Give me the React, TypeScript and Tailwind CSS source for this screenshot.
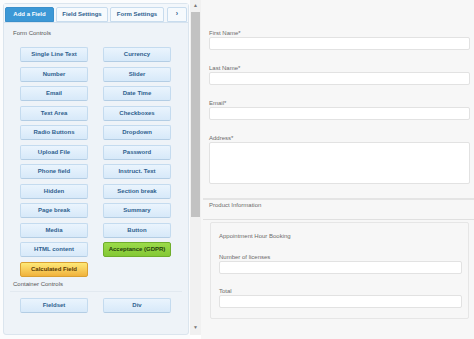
import React from "react";

const rows: [string, string | null][] = [
  ["Single Line Text", "Currency"],
  ["Number", "Slider"],
  ["Email", "Date Time"],
  ["Text Area", "Checkboxes"],
  ["Radio Buttons", "Dropdown"],
  ["Upload File", "Password"],
  ["Phone field", "Instruct. Text"],
  ["Hidden", "Section break"],
  ["Page break", "Summary"],
  ["Media", "Button"],
  ["HTML content", "Acceptance (GDPR)"],
  ["Calculated Field", null],
];

function Btn({ label }: { label: string }) {
  if (label === "Acceptance (GDPR)") {
    return (
      <div className="h-[15px] flex items-center justify-center rounded-[2px] border border-[#6fae2c] bg-gradient-to-b from-[#9bdb4a] to-[#84c835] text-[6px] font-bold text-[#24400c]">
        {label}
      </div>
    );
  }
  if (label === "Calculated Field") {
    return (
      <div className="h-[15px] flex items-center justify-center rounded-[2px] border border-[#d9a032] bg-gradient-to-b from-[#fde977] to-[#f0b23c] text-[6px] font-bold text-[#5a3b06]">
        {label}
      </div>
    );
  }
  return (
    <div className="h-[15px] flex items-center justify-center rounded-[2px] border border-[#c4dbef] border-b-[#b3cde4] bg-gradient-to-b from-[#eaf4fd] to-[#d7e9f9] text-[6px] font-bold text-[#2f5f8e]">
      {label}
    </div>
  );
}

function Field({ label, h = 13, w = 261, mb = 14 }: { label: string; h?: number; w?: number; mb?: number }) {
  return (
    <div style={{ marginBottom: mb }}>
      <div className="h-[8px] leading-[8px] text-[6px] text-[#6b6b6b]">{label}</div>
      <div className="bg-white border border-[#e2e2e2] rounded-[2px]" style={{ height: h, width: w }} />
    </div>
  );
}

export default function App() {
  return (
    <div
      className="w-[474px] h-[339px] flex bg-white overflow-hidden"
      style={{ fontFamily: '"Liberation Sans", Arial, sans-serif' }}
    >
      {/* Left panel */}
      <div className="w-[190px] pl-[3px] pt-[3px] pb-[4px] bg-[#fbfcfd]">
        <div className="w-[186px] h-full rounded-[3px] border border-[#dbe5ee] bg-[#eef3f8] flex flex-col">
          <div className="h-[19px] flex items-end gap-[2px] px-[1px] border-b border-[#d5e2ee] bg-[#f3f7fb]">
            <div className="w-[49px] h-[15px] flex items-center justify-center rounded-t-[2px] bg-[#3c98d6] border border-[#3a8fcb] text-[6px] font-bold text-white">
              Add a Field
            </div>
            <div className="w-[52px] h-[15px] flex items-center justify-center rounded-t-[2px] bg-[#f6fafd] border border-[#c8dcee] text-[6px] font-bold text-[#2f5f8e]">
              Field Settings
            </div>
            <div className="w-[54px] h-[15px] flex items-center justify-center rounded-t-[2px] bg-[#f6fafd] border border-[#c8dcee] text-[6px] font-bold text-[#2f5f8e]">
              Form Settings
            </div>
            <div className="ml-[1px] w-[20px] h-[15px] flex items-center justify-center rounded-t-[2px] bg-[#f6fafd] border border-[#c8dcee] text-[7px] font-bold text-[#2f5f8e]">
              ›
            </div>
          </div>
          <div className="pt-[6px] pl-[9px] h-[14px] leading-[8px] text-[6px] text-[#555]">Form Controls</div>
          <div className="mt-[10px] ml-[16px] grid grid-cols-[68px_68px] gap-x-[15px] gap-y-[4.5px]">
            {rows.map(([a, b], i) => (
              <React.Fragment key={i}>
                <Btn label={a} />
                {b ? <Btn label={b} /> : <div />}
              </React.Fragment>
            ))}
          </div>
          <div className="mt-[3px] pl-[9px] h-[8px] leading-[8px] text-[6px] text-[#555]">Container Controls</div>
          <div className="mt-[3px] mx-[6px] border-t border-[#e2e9f0]" />
          <div className="mt-[6px] ml-[16px] grid grid-cols-[68px_68px] gap-x-[15px]">
            <Btn label="Fieldset" />
            <Btn label="Div" />
          </div>
        </div>
      </div>

      {/* Scrollbar */}
      <div className="w-[11px] h-[335px] bg-[#f1f1f1] flex flex-col items-center">
        <div className="h-[12px] flex items-center justify-center text-[5px] text-[#777]">▲</div>
        <div className="w-[9px] h-[205px] bg-[#c2c2c2]" />
        <div className="flex-1" />
        <div className="h-[14px] flex items-center justify-center text-[5px] text-[#777]">▼</div>
      </div>

      {/* Right area */}
      <div className="flex-1 bg-[#f7f7f7] pt-[29px] pl-[8px] flex flex-col">
        <Field label="First Name*" />
        <Field label="Last Name*" />
        <Field label="Email*" />
        <Field label="Address*" h={42} mb={14} />
        <div className="-ml-[6px] border-t-2 border-[#e4e4e4]" />
        <div className="mt-[1px] h-[8px] leading-[8px] text-[6px] text-[#6b6b6b]">Product Information</div>
        <div className="mt-[10px] -ml-[6px] border-t border-[#e0e0e0]" />
        <div className="mt-[2px] ml-[1px] w-[259px] h-[97px] border border-[#e6e6e6] rounded-[2px] pl-[8px] pt-[9px]">
          <div className="h-[8px] leading-[8px] text-[6px] text-[#6b6b6b]">Appointment Hour Booking</div>
          <div className="mt-[13px]">
            <Field label="Number of licenses" w={243} mb={13} />
            <Field label="Total" w={243} mb={0} />
          </div>
        </div>
      </div>
    </div>
  );
}
